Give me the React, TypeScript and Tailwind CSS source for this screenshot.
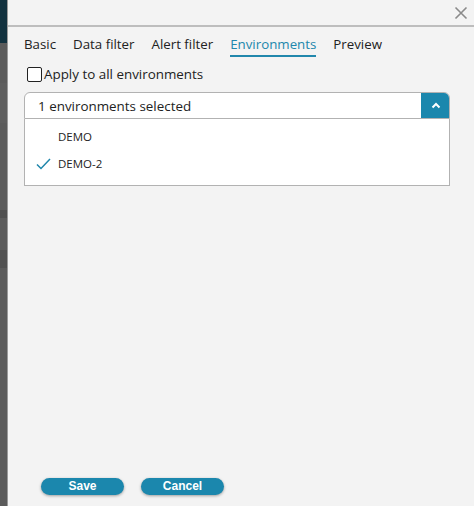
import React, { useState } from "react";

const tabs = ["Basic", "Data filter", "Alert filter", "Environments", "Preview"];

const environments = [
    { name: "DEMO", selected: false },
    { name: "DEMO-2", selected: true },
];

export default function App() {
    const [activeTab, setActiveTab] = useState("Environments");
    const [applyAll, setApplyAll] = useState(false);
    const [open, setOpen] = useState(true);

    const selectedCount = environments.filter((e) => e.selected).length;

    return (
        <div className="flex w-[474px] h-[506px] overflow-hidden" style={{ fontFamily: '"Open Sans", sans-serif' }}>
            {/* background app edge */}
            <div className="w-[7px] flex flex-col shrink-0 bg-[#5b5b5b]">
                <div className="h-[43px] bg-[#12323f]"></div>
                <div className="h-[40px] bg-[#5e5e5e] mt-[40px]"></div>
                <div className="h-[8px] bg-[#4f4f4f] mt-[87px]"></div>
                <div className="h-[18px] bg-[#515151] mt-[32px]"></div>
            </div>

            {/* dialog */}
            <div className="flex-1 flex flex-col bg-[#f3f3f3] border-l border-[#9a9a9a]">
                <div className="h-[27px] flex items-center justify-end pr-[6px] border-b-2 border-[#bdbdbd] shrink-0">
                    <button className="text-[#8a8a8a]">
                        <svg width="14" height="14" viewBox="0 0 14 14" fill="none" stroke="currentColor" strokeWidth="1.6">
                            <path d="M1.5 1.5 L12.5 12.5 M12.5 1.5 L1.5 12.5" />
                        </svg>
                    </button>
                </div>

                <div className="flex items-center gap-[17px] pl-[16px] pt-[8px] text-[13.3px] text-[#222]">
                    {tabs.map((tab) => (
                        <button
                            key={tab}
                            onClick={() => setActiveTab(tab)}
                            className={
                                tab === activeTab
                                    ? "leading-[19px] pb-[1px] text-[#2187ac] border-b-2 border-[#2187ac]"
                                    : "leading-[19px] pb-[1px] border-b-2 border-transparent"
                            }
                        >
                            {tab}
                        </button>
                    ))}
                </div>

                <label className="flex items-center ml-[19px] mt-[7px] text-[13.4px] text-[#222] cursor-pointer">
                    <span
                        onClick={() => setApplyAll(!applyAll)}
                        className="w-[15px] h-[15px] border-[1.5px] border-[#222] rounded-[2px] bg-white mr-[2px]"
                    ></span>
                    Apply to all environments
                </label>

                <div className="ml-[16px] mr-[24px] mt-[8px]">
                    <div className="flex h-[27px] bg-white border border-[#b2b2b2] rounded-t-[6px] overflow-hidden">
                        <div className="flex-1 flex items-center pl-[13px] text-[13.4px] text-[#222]">
                            {selectedCount} environments selected
                        </div>
                        <button
                            onClick={() => setOpen(!open)}
                            className="w-[29px] -my-px -mr-px flex items-center justify-center bg-[#1b87ad] text-white"
                        >
                            <svg width="10" height="7" viewBox="0 0 10 7" fill="none" stroke="currentColor" strokeWidth="2">
                                <path d="M1.5 5.5 L5 2 L8.5 5.5" />
                            </svg>
                        </button>
                    </div>
                    {open && (
                        <div className="bg-white border border-t-0 border-[#b2b2b2] pt-[4px] pb-[8px]">
                            {environments.map((env) => (
                                <div key={env.name} className="flex items-center h-[27px] pl-[11px] text-[11.5px] text-[#222]">
                                    <span className="w-[22px] flex items-center">
                                        {env.selected && (
                                            <svg width="15" height="12" viewBox="0 0 15 12" fill="none" stroke="#1f86ab" strokeWidth="1.5">
                                                <path d="M1 6.5 L5 10.5 L14 1" />
                                            </svg>
                                        )}
                                    </span>
                                    {env.name}
                                </div>
                            ))}
                        </div>
                    )}
                </div>

                <div
                    className="mt-auto mb-[11px] flex gap-[17px] ml-[33px]"
                    style={{ fontFamily: '"Liberation Sans", Arial, sans-serif' }}
                >
                    <button className="w-[83px] h-[17px] rounded-full bg-[#1b87ad] text-white text-[12px] font-bold leading-[17px] shadow-[0_1px_3px_rgba(0,0,0,0.35)]">
                        Save
                    </button>
                    <button className="w-[83px] h-[17px] rounded-full bg-[#1b87ad] text-white text-[12px] font-bold leading-[17px] shadow-[0_1px_3px_rgba(0,0,0,0.35)]">
                        Cancel
                    </button>
                </div>
            </div>
        </div>
    );
}
